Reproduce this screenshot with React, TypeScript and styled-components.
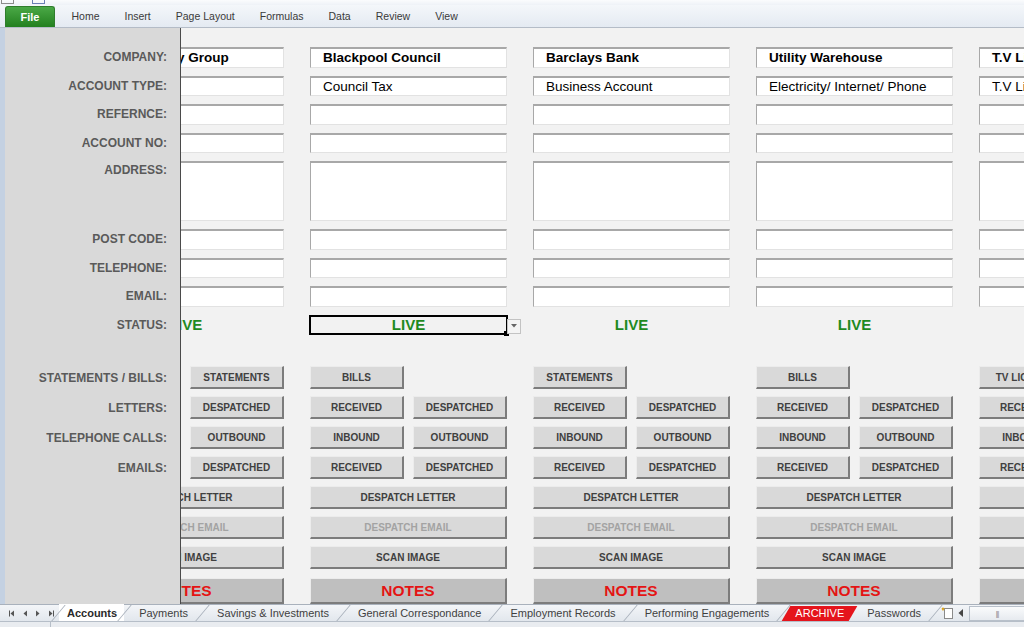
import React from 'react'
import styled, { createGlobalStyle, css } from 'styled-components'

const GlobalStyle = createGlobalStyle`
  html, body {
    margin: 0;
    padding: 0;
    overflow: hidden;
    background: #f2f2f2;
  }
  body {
    font-family: "Liberation Sans", Arial, sans-serif;
  }
`

const Window = styled.div`
  width: 1024px;
  height: 627px;
  display: flex;
  flex-direction: column;
  overflow: hidden;
  background: #f2f2f2;
`

const TitleStrip = styled.div`
  height: 5px;
  flex: none;
  display: flex;
  gap: 18px;
  padding-left: 1px;
  background: linear-gradient(#fbfcfd, #eef2f7);
`

const TitleIcon = styled.span<{ $color: string }>`
  width: 11px;
  height: 3px;
  border: 1px solid ${({ $color }) => $color};
  border-top: none;
`

const Ribbon = styled.div`
  height: 23px;
  flex: none;
  box-sizing: border-box;
  display: flex;
  align-items: flex-end;
  padding-left: 5px;
  background: linear-gradient(#f4f7fa, #e4eaf2);
  border-bottom: 1px solid #b4bcc7;
`

const FileTab = styled.div`
  width: 50px;
  height: 21px;
  box-sizing: border-box;
  display: flex;
  align-items: center;
  justify-content: center;
  border: 1px solid #2f7d2c;
  border-bottom: none;
  border-radius: 3px 3px 0 0;
  background: linear-gradient(#4aa846, #23801f);
  color: #fff;
  font-size: 11px;
  font-weight: bold;
  margin-right: 4px;
`

const RibbonTab = styled.div`
  height: 21px;
  line-height: 21px;
  padding: 0 12.5px;
  font-size: 10.5px;
  color: #3a3a3a;
`

const Sheet = styled.div`
  flex: 1;
  position: relative;
  overflow: hidden;
  border-left: 5px solid #c4d1e2;
  background: #f2f2f2;
`

const Columns = styled.div`
  display: flex;
  gap: 26px;
  padding: 19px 0 0 82px;
`

const Column = styled.div`
  width: 197px;
  flex: none;
  display: flex;
  flex-direction: column;
`

const FieldsSection = styled.div`
  display: flex;
  flex-direction: column;
  gap: 8px;
`

const ButtonsSection = styled.div`
  display: flex;
  flex-direction: column;
  gap: 7px;
  margin-top: 31px;
`

const Field = styled.div<{ $tall?: boolean; $bold?: boolean }>`
  height: ${({ $tall }) => ($tall ? '60px' : '20.5px')};
  box-sizing: border-box;
  display: flex;
  align-items: ${({ $tall }) => ($tall ? 'flex-start' : 'center')};
  padding-left: 12px;
  background: #fff;
  border: 1px solid #e2e2e2;
  border-top: 2px solid #a8a8a8;
  border-left-color: #a8a8a8;
  font-size: 13.5px;
  font-weight: ${({ $bold }) => ($bold ? 'bold' : 'normal')};
  color: #000;
  white-space: nowrap;
  overflow: hidden;
`

const Status = styled.div<{ $selected?: boolean }>`
  position: relative;
  height: 20.5px;
  box-sizing: border-box;
  display: flex;
  align-items: center;
  justify-content: center;
  color: #1f8a1f;
  font-size: 15px;
  font-weight: bold;
  ${({ $selected }) =>
    $selected &&
    css`
      border: 2px solid #000;
      margin: 0 -1px;
    `}
`

const DropArrow = styled.div`
  position: absolute;
  left: calc(100% + 1px);
  top: 2px;
  width: 14px;
  height: 15px;
  box-sizing: border-box;
  display: flex;
  align-items: center;
  justify-content: center;
  border: 1px solid #c3c3c3;
  background: #f4f4f4;
`

const FillHandle = styled.div`
  position: absolute;
  right: -3px;
  bottom: -3px;
  width: 5px;
  height: 5px;
  background: #000;
`

const ButtonRow = styled.div`
  display: flex;
  gap: 9px;
`

const Btn = styled.div<{ $wide?: boolean; $muted?: boolean; $notes?: boolean }>`
  width: ${({ $wide }) => ($wide ? '197px' : '94px')};
  height: ${({ $notes }) => ($notes ? '26px' : '23px')};
  margin-top: ${({ $notes }) => ($notes ? '2px' : '0')};
  flex: none;
  box-sizing: border-box;
  display: flex;
  align-items: center;
  justify-content: center;
  background: ${({ $notes }) => ($notes ? '#bfbfbf' : '#d9d9d9')};
  border-top: 1px solid #ececec;
  border-left: 1px solid #ececec;
  border-right: 2px solid #7c7c7c;
  border-bottom: 2px solid #7c7c7c;
  color: ${({ $muted, $notes }) => ($notes ? '#e41414' : $muted ? '#a3a3a3' : '#404040')};
  font-size: ${({ $notes }) => ($notes ? '15.5px' : '10px')};
  font-weight: bold;
  white-space: nowrap;
`

const LeftPanel = styled.div`
  position: absolute;
  top: 0;
  left: 0;
  bottom: 0;
  width: 176px;
  box-sizing: border-box;
  padding: 19px 13px 0 0;
  background: #d9d9d9;
  border-right: 1px solid #4a4a4a;
`

const Label = styled.div<{ $tall?: boolean; $button?: boolean }>`
  height: ${({ $tall, $button }) => ($tall ? '60px' : $button ? '23px' : '20.5px')};
  display: flex;
  align-items: ${({ $tall }) => ($tall ? 'flex-start' : 'center')};
  padding-top: ${({ $tall }) => ($tall ? '2px' : '0')};
  box-sizing: border-box;
  justify-content: flex-end;
  font-size: 12px;
  font-weight: bold;
  color: #5a5a5a;
  white-space: nowrap;
`

const TabBar = styled.div`
  height: 17px;
  flex: none;
  display: flex;
  align-items: stretch;
  background: linear-gradient(#f3f5f8, #e2e7ed);
  border-top: 1px solid #a9b1bc;
  box-sizing: border-box;
`

const NavGroup = styled.div`
  width: 58px;
  flex: none;
  display: flex;
  align-items: center;
  gap: 7px;
  padding-left: 9px;
  box-sizing: border-box;
`

const Tab = styled.div<{ $active?: boolean }>`
  display: flex;
  align-items: center;
  padding: 0 ${({ $active }) => ($active ? '7px' : '14px')};
  font-size: 11px;
  color: #3f3f3f;
  white-space: nowrap;
  ${({ $active }) =>
    $active &&
    css`
      background: #fff;
      font-weight: bold;
      color: #2a2a2a;
      margin-top: -1px;
      padding-left: 8px;
    `}
`

const Slant = styled.span`
  width: 1px;
  flex: none;
  background: #a5adb8;
  transform: skewX(-40deg);
`

const ArchiveTab = styled.div`
  position: relative;
  display: flex;
  align-items: center;
  padding: 0 9px;
  margin-left: 2px;
  font-size: 11px;
  color: #fff;
  z-index: 0;
  &::before {
    content: '';
    position: absolute;
    inset: 1px 0 0 0;
    background: #e5141c;
    transform: skewX(-30deg);
    z-index: -1;
  }
`

const TabEnd = styled.div`
  flex: 1;
  display: flex;
  align-items: center;
  gap: 5px;
  padding-left: 5px;
`

const ScrollBox = styled.div`
  flex: 1;
  height: 13px;
  display: flex;
  align-items: center;
  justify-content: center;
  border: 1px solid #b8c0ca;
  border-right: none;
  background: linear-gradient(#fafbfc, #e6eaef);
  font-size: 7px;
  color: #8a8a8a;
  letter-spacing: -1px;
`

const BottomStrip = styled.div`
  height: 5px;
  flex: none;
  display: flex;
  border-top: 1px solid #b6bec8;
  background: #e9ecf0;
`

const BottomCell = styled.div`
  width: 50px;
  border-right: 1px solid #b6bec8;
`

type Col = {
  company: string
  type: string
  bills: string[]
  selected?: boolean
}

const columns: Col[] = [
  { company: 'Virgin Money Group', type: 'Mortgage', bills: ['BILLS', 'STATEMENTS'] },
  { company: 'Blackpool Council', type: 'Council Tax', bills: ['BILLS'], selected: true },
  { company: 'Barclays Bank', type: 'Business Account', bills: ['STATEMENTS'] },
  { company: 'Utility Warehouse', type: 'Electricity/ Internet/ Phone', bills: ['BILLS'] },
  { company: 'T.V Licence', type: 'T.V Licence', bills: ['TV LICENCE'] },
]

const fieldLabels = ['COMPANY:', 'ACCOUNT TYPE:', 'REFERNCE:', 'ACCOUNT NO:', 'ADDRESS:', 'POST CODE:', 'TELEPHONE:', 'EMAIL:', 'STATUS:']
const buttonLabels = ['STATEMENTS / BILLS:', 'LETTERS:', 'TELEPHONE CALLS:', 'EMAILS:']
const pairRows = [
  ['RECEIVED', 'DESPATCHED'],
  ['INBOUND', 'OUTBOUND'],
  ['RECEIVED', 'DESPATCHED'],
]

const sheetTabs = ['Payments', 'Savings & Investments', 'General Correspondance', 'Employment Records', 'Performing Engagements']

const NavIcon = ({ kind }: { kind: 'first' | 'prev' | 'next' | 'last' }) => {
  const left = kind === 'first' || kind === 'prev'
  return (
    <svg width="6" height="7" viewBox="0 0 6 7">
      {left ? <path d="M5 0.5 L1.5 3.5 L5 6.5 Z" fill="#555" /> : <path d="M1 0.5 L4.5 3.5 L1 6.5 Z" fill="#555" />}
      {kind === 'first' && <rect x="0" y="0.5" width="1" height="6" fill="#555" />}
      {kind === 'last' && <rect x="5" y="0.5" width="1" height="6" fill="#555" />}
    </svg>
  )
}

const AccountColumn = ({ col }: { col: Col }) => (
  <Column>
    <FieldsSection>
      <Field $bold>{col.company}</Field>
      <Field>{col.type}</Field>
      <Field />
      <Field />
      <Field $tall />
      <Field />
      <Field />
      <Field />
      <Status $selected={col.selected}>
        LIVE
        {col.selected && (
          <>
            <FillHandle />
            <DropArrow>
              <svg width="6" height="4" viewBox="0 0 6 4">
                <path d="M0 0 L6 0 L3 3.5 Z" fill="#666" />
              </svg>
            </DropArrow>
          </>
        )}
      </Status>
    </FieldsSection>
    <ButtonsSection>
      <ButtonRow>
        {col.bills.map((b) => (
          <Btn key={b}>{b}</Btn>
        ))}
      </ButtonRow>
      {pairRows.map((pair, i) => (
        <ButtonRow key={i}>
          <Btn>{pair[0]}</Btn>
          <Btn>{pair[1]}</Btn>
        </ButtonRow>
      ))}
      <Btn $wide>DESPATCH LETTER</Btn>
      <Btn $wide $muted>
        DESPATCH EMAIL
      </Btn>
      <Btn $wide>SCAN IMAGE</Btn>
      <Btn $wide $notes>
        NOTES
      </Btn>
    </ButtonsSection>
  </Column>
)

export default function App() {
  return (
    <>
      <GlobalStyle />
      <Window>
        <TitleStrip>
          <TitleIcon $color="#8c8c8c" />
          <TitleIcon $color="#6b7fb5" />
        </TitleStrip>
        <Ribbon>
          <FileTab>File</FileTab>
          {['Home', 'Insert', 'Page Layout', 'Formulas', 'Data', 'Review', 'View'].map((t) => (
            <RibbonTab key={t}>{t}</RibbonTab>
          ))}
        </Ribbon>
        <Sheet>
          <Columns>
            {columns.map((c) => (
              <AccountColumn key={c.company} col={c} />
            ))}
          </Columns>
          <LeftPanel>
            <FieldsSection>
              {fieldLabels.map((l) => (
                <Label key={l} $tall={l === 'ADDRESS:'}>
                  {l}
                </Label>
              ))}
            </FieldsSection>
            <ButtonsSection>
              {buttonLabels.map((l) => (
                <Label key={l} $button>
                  {l}
                </Label>
              ))}
            </ButtonsSection>
          </LeftPanel>
        </Sheet>
        <TabBar>
          <NavGroup>
            <NavIcon kind="first" />
            <NavIcon kind="prev" />
            <NavIcon kind="next" />
            <NavIcon kind="last" />
          </NavGroup>
          <Slant />
          <Tab $active>Accounts</Tab>
          <Slant />
          {sheetTabs.map((t) => (
            <React.Fragment key={t}>
              <Tab>{t}</Tab>
              <Slant />
            </React.Fragment>
          ))}
          <ArchiveTab>ARCHIVE</ArchiveTab>
          <Tab>Passwords</Tab>
          <Slant />
          <TabEnd>
            <svg width="12" height="12" viewBox="0 0 12 12">
              <rect x="3.5" y="1.5" width="8" height="10" fill="#fff" stroke="#8a8a8a" />
              <path d="M1 1 L3 3 M3 1 L1 3" stroke="#d9a21b" strokeWidth="1.5" />
            </svg>
            <svg width="6" height="8" viewBox="0 0 6 8">
              <path d="M5 0 L0.5 4 L5 8 Z" fill="#444" />
            </svg>
            <ScrollBox>|||</ScrollBox>
          </TabEnd>
        </TabBar>
        <BottomStrip>
          <BottomCell />
        </BottomStrip>
      </Window>
    </>
  )
}
